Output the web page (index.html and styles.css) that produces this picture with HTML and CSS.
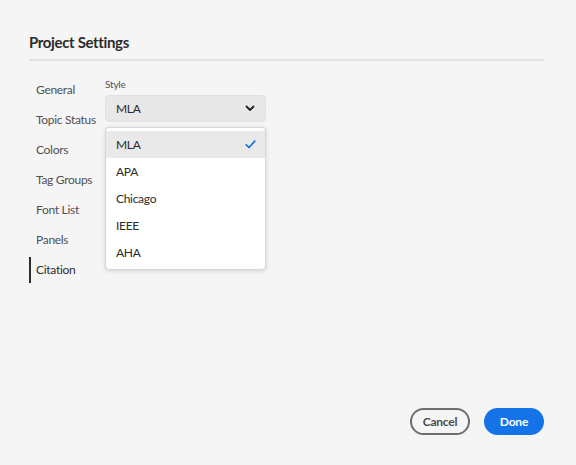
FILE: index.html
```html
<!DOCTYPE html>
<html>
<head>
<meta charset="utf-8">
<link rel="stylesheet" href="styles.css">
</head>
<body>
<div class="dialog">
  <header class="header">
    <h1 class="title">Project Settings</h1>
  </header>
  <div class="main">
    <nav class="nav">
      <div class="nav-item">General</div>
      <div class="nav-item">Topic Status</div>
      <div class="nav-item">Colors</div>
      <div class="nav-item">Tag Groups</div>
      <div class="nav-item">Font List</div>
      <div class="nav-item">Panels</div>
      <div class="nav-item active">Citation</div>
    </nav>
    <div class="content">
      <div class="field-label">Style</div>
      <div class="picker">
        <span>MLA</span>
        <svg class="chevron" width="10" height="7" viewBox="0 0 10 7"><path d="M1.5 1.5 L5 5 L8.5 1.5" fill="none" stroke="#222" stroke-width="1.8" stroke-linecap="round" stroke-linejoin="round"/></svg>
      </div>
      <div class="popover">
        <div class="option selected"><span>MLA</span>
          <svg class="check" width="11" height="9" viewBox="0 0 11 9"><path d="M1.2 4.8 L4 7.5 L9.8 1.2" fill="none" stroke="#1473e6" stroke-width="1.7" stroke-linecap="round" stroke-linejoin="round"/></svg>
        </div>
        <div class="option"><span>APA</span></div>
        <div class="option"><span>Chicago</span></div>
        <div class="option"><span>IEEE</span></div>
        <div class="option"><span>AHA</span></div>
      </div>
    </div>
  </div>
  <footer class="footer">
    <button class="btn btn-secondary">Cancel</button>
    <button class="btn btn-primary">Done</button>
  </footer>
</div>
</body>
</html>
```
FILE: styles.css
```css
html, body {
  margin: 0;
  padding: 0;
  background: #f5f5f5;
}
body {
  font-family: Lato, "Open Sans", sans-serif;
  color: #4b4b4b;
  letter-spacing: -0.3px;
}
.dialog {
  box-sizing: border-box;
  width: 576px;
  height: 465px;
  padding: 32px 32px 30px 29px;
  display: flex;
  flex-direction: column;
}
.header {
  padding-bottom: 7px;
  border-bottom: 2px solid #e3e3e3;
}
.title {
  margin: 0;
  font-size: 15px;
  line-height: 20px;
  font-weight: 700;
  color: #2c2c2c;
  letter-spacing: -0.35px;
}
.main {
  display: flex;
  padding-top: 16px;
}
.nav {
  width: 76px;
  display: flex;
  flex-direction: column;
  gap: 4px;
}
.nav-item {
  height: 26px;
  line-height: 26px;
  font-size: 12px;
  padding-left: 7px;
  color: #505050;
}
.nav-item.active {
  padding-left: 5px;
  border-left: 2px solid #2c2c2c;
  color: #2c2c2c;
}
.content {
  width: 161px;
  padding-top: 1px;
}
.field-label {
  font-size: 10px;
  line-height: 13px;
  color: #505050;
  margin-bottom: 4px;
  letter-spacing: -0.2px;
}
.picker {
  box-sizing: border-box;
  height: 27px;
  background: #e8e8e8;
  border: 1px solid #e0e0e0;
  border-radius: 4px;
  display: flex;
  align-items: center;
  justify-content: space-between;
  padding: 0 10px;
  font-size: 12px;
  color: #2c2c2c;
}
.popover {
  margin-top: 5px;
  background: #fff;
  border: 1px solid #d8d8d8;
  border-radius: 4px;
  box-shadow: 0 1px 4px rgba(0,0,0,0.15);
  padding: 3px 0;
}
.option {
  height: 27px;
  display: flex;
  align-items: center;
  justify-content: space-between;
  padding: 0 9px 0 10px;
  font-size: 12px;
  color: #2c2c2c;
}
.option.selected {
  background: #e9e9e9;
}
.footer {
  margin-top: auto;
  display: flex;
  justify-content: flex-end;
  gap: 14px;
}
.btn {
  box-sizing: border-box;
  height: 27px;
  width: 60px;
  border-radius: 14px;
  font-family: inherit;
  font-size: 12px;
  font-weight: 700;
  letter-spacing: -0.2px;
  padding: 0;
}
.btn-secondary {
  background: transparent;
  border: 2px solid #6e6e6e;
  color: #4b4b4b;
}
.btn-primary {
  background: #1473e6;
  border: none;
  color: #fff;
}
```
